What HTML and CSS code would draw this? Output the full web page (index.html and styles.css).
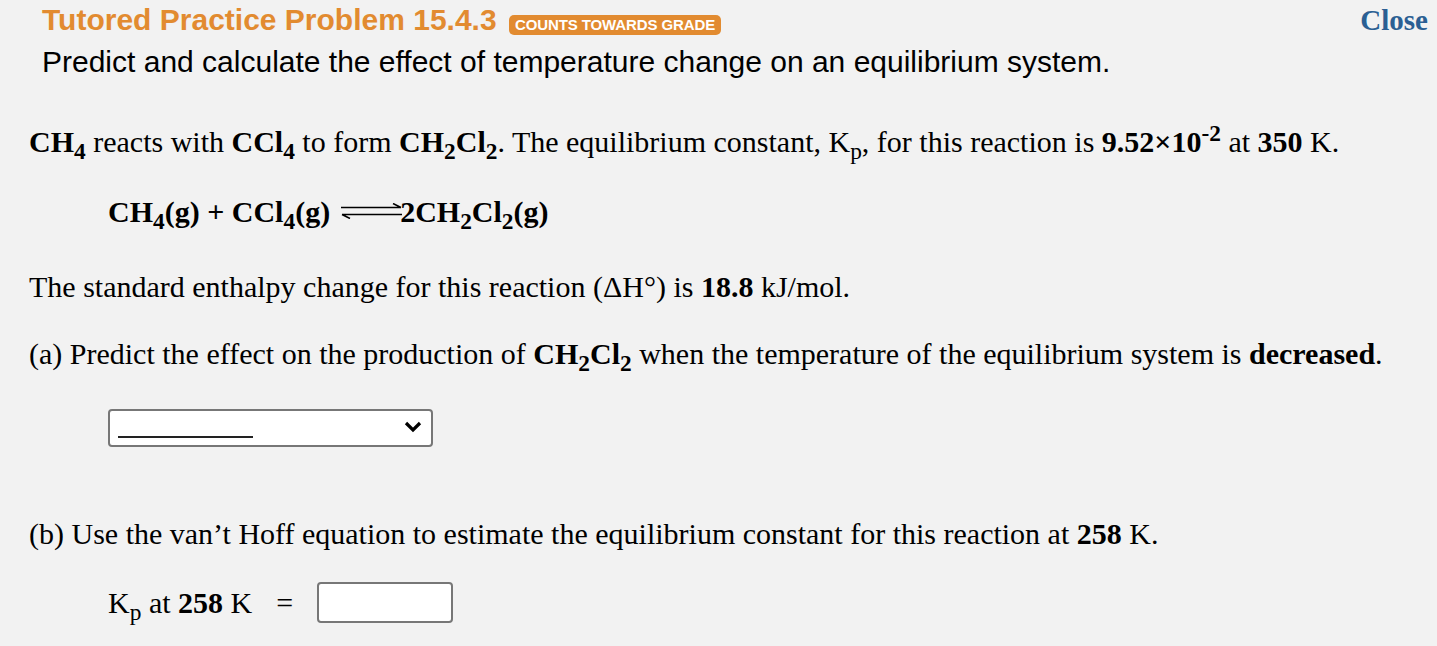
FILE: index.html
```html
<!DOCTYPE html>
<html>
<head>
<meta charset="utf-8">
<link rel="stylesheet" href="styles.css">
</head>
<body>
<div class="page">
  <header class="head">
    <div class="head-text">
      <h1 class="title">Tutored Practice Problem 15.4.3 <span class="badge">COUNTS TOWARDS GRADE</span></h1>
      <p class="subtitle">Predict and calculate the effect of temperature change on an equilibrium system.</p>
    </div>
    <a class="close" href="#">Close</a>
  </header>

  <main class="problem">
    <p class="line l1"><b>CH<sub>4</sub></b> reacts with <b>CCl<sub>4</sub></b> to form <b>CH<sub>2</sub>Cl<sub>2</sub></b>. The equilibrium constant, K<sub>p</sub>, for this reaction is <b>9.52×10<sup>-2</sup></b> at <b>350</b> K.</p>

    <p class="line eq"><b>CH<sub>4</sub>(g) + CCl<sub>4</sub>(g)</b><svg class="arrow" width="63" height="16" viewBox="0 0 63 16"><path d="M1 4.5H61M53 0.5L61 4.5" stroke="#000" stroke-width="1.6" fill="none"/><path d="M2 11.5H62M2 11.5L10 15.5" stroke="#000" stroke-width="1.6" fill="none"/></svg><b>2CH<sub>2</sub>Cl<sub>2</sub>(g)</b></p>

    <p class="line l3">The standard enthalpy change for this reaction (ΔH°) is <b>18.8</b> kJ/mol.</p>

    <p class="line l4">(a) Predict the effect on the production of <b>CH<sub>2</sub>Cl<sub>2</sub></b> when the temperature of the equilibrium system is <b>decreased</b>.</p>

    <div class="select">
      <span class="blank"></span>
      <svg class="chev" width="18" height="12" viewBox="0 0 18 12"><path d="M2 2L9 9L16 2" stroke="#000" stroke-width="3.2" fill="none"/></svg>
    </div>

    <p class="line l5">(b) Use the van’t Hoff equation to estimate the equilibrium constant for this reaction at <b>258</b> K.</p>

    <div class="answer">
      <span class="klabel">K<sub>p</sub> at <b>258</b> K</span>
      <span class="eqsign">=</span>
      <span class="input"></span>
    </div>
  </main>
</div>
</body>
</html>
```

FILE: styles.css
```css
html, body {
  margin: 0;
  padding: 0;
  background: #f2f2f2;
}
.page {
  width: 1437px;
  height: 646px;
  overflow: hidden;
  box-sizing: border-box;
}
.head {
  display: flex;
  justify-content: space-between;
  align-items: flex-start;
  padding: 4px 9px 0 42px;
}
.title {
  margin: 0;
  font-family: "Liberation Sans", Arial, sans-serif;
  font-weight: bold;
  font-size: 30px;
  line-height: 32px;
  color: #e28b30;
  white-space: nowrap;
}
.badge {
  display: inline-block;
  vertical-align: 0px;
  background: #e28b30;
  color: #fff;
  font-size: 15px;
  line-height: 20px;
  padding: 0 6px;
  border-radius: 5px;
  margin-left: 4px;
  letter-spacing: -0.1px;
}
.subtitle {
  margin: 11px 0 0 0;
  font-family: "Liberation Sans", Arial, sans-serif;
  font-size: 30px;
  line-height: 30px;
  color: #000;
  white-space: nowrap;
}
.close {
  font-family: "Liberation Serif", "Times New Roman", serif;
  font-weight: bold;
  font-size: 29px;
  color: #2b5f93;
  text-decoration: none;
  line-height: 34px;
  margin-top: -1px;
}
.problem {
  padding-left: 29px;
  font-family: "Liberation Serif", "Times New Roman", serif;
  font-size: 30px;
  color: #000;
}
.line {
  margin: 0;
  line-height: 32px;
  white-space: nowrap;
}
sub {
  font-size: 0.78em;
  vertical-align: -0.32em;
  line-height: 0;
}
sup {
  font-size: 0.78em;
  vertical-align: 0.45em;
  line-height: 0;
}
.l1 { margin-top: 49px; }
.eq { margin-top: 38px; padding-left: 79px; }
.arrow { vertical-align: 3px; margin: 0 -3px 0 10px; }
.l3 { margin-top: 43px; }
.l4 { margin-top: 35px; }
.select {
  margin: 39px 0 0 79px;
  width: 325px;
  height: 38px;
  box-sizing: border-box;
  background: #fff;
  border: 2px solid #777;
  border-radius: 4px;
  display: flex;
  align-items: center;
  justify-content: space-between;
  padding: 0 9px 0 8px;
}
.blank {
  width: 135px;
  height: 2px;
  background: #222;
  margin-top: 18px;
}
.chev { margin-top: -2px; }
.l5 { margin-top: 71px; }
.answer {
  margin: 32px 0 0 79px;
  display: flex;
  align-items: center;
}
.eqsign { margin: 0 24px 0 24px; }
.input {
  width: 136px;
  height: 41px;
  box-sizing: border-box;
  background: #fff;
  border: 2px solid #777;
  border-radius: 4px;
}
```
